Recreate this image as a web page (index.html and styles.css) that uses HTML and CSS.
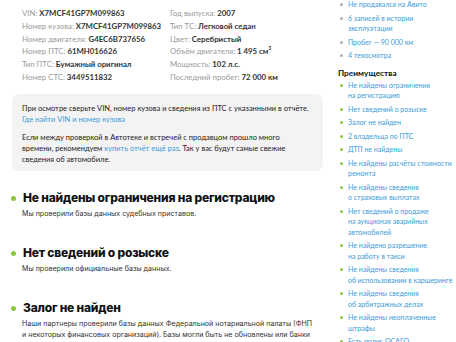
FILE: index.html
```html
<!DOCTYPE html>
<html lang="ru">
<head>
  <meta charset="UTF-8">
  <meta name="viewport" content="width=device-width, initial-scale=1.0">
  <title>Автотека — отчёт</title>
  <link rel="stylesheet" href="styles.css">
</head>
<body>

  <div class="page">
    <div class="main">

      <div class="info">
        <div class="info-col">
          <div class="row"><span class="lbl">VIN:</span> X7MCF41GP7M099863</div>
          <div class="row"><span class="lbl">Номер кузова:</span> X7MCF41GP7M099863</div>
          <div class="row"><span class="lbl">Номер двигателя:</span> G4EC6B737656</div>
          <div class="row"><span class="lbl">Номер ПТС:</span> 61MH016626</div>
          <div class="row"><span class="lbl">Тип ПТС:</span> Бумажный оригинал</div>
          <div class="row"><span class="lbl">Номер СТС:</span> 3449511832</div>
        </div>
        <div class="info-col">
          <div class="row"><span class="lbl">Год выпуска:</span> 2007</div>
          <div class="row"><span class="lbl">Тип ТС:</span> Легковой седан</div>
          <div class="row"><span class="lbl">Цвет:</span> Серебристый</div>
          <div class="row"><span class="lbl">Объём двигателя:</span> 1 495 см<sup>3</sup></div>
          <div class="row"><span class="lbl">Мощность:</span> 102 л.с.</div>
          <div class="row"><span class="lbl">Последний пробег:</span> 72 000 км</div>
        </div>
      </div>

      <div class="notice">
        <p>При осмотре сверьте VIN, номер кузова и сведения из ПТС с указанными в отчёте.<br>
          <a href="#">Где найти VIN и номер кузова</a></p>
        <p>Если между проверкой в Автотеке и встречей с продавцом прошло много<br>времени, рекомендуем <a href="#">купить отчёт ещё раз</a>. Так у вас будут самые свежие<br>сведения об автомобиле.</p>
      </div>

      <div class="check">
        <h2>Не найдены ограничения на регистрацию</h2>
        <p>Мы проверили базы данных судебных приставов.</p>
      </div>

      <div class="check">
        <h2>Нет сведений о розыске</h2>
        <p>Мы проверили официальные базы данных.</p>
      </div>

      <div class="check">
        <h2>Залог не найден</h2>
        <p>Наши партнеры проверили базы данных Федеральной нотариальной палаты (ФНП<br>и некоторых финансовых организаций). Базы могли быть не обновлены или банки<br>не передали информацию о залоге в ФНП, поэтому гарантированную</p>
      </div>

    </div>

    <div class="aside">
      <ul class="list grey">
        <li><a href="#">Не продавался на Авито</a></li>
        <li><a href="#">6 записей в истории<br>эксплуатации</a></li>
        <li><a href="#">Пробег — 90 000 км</a></li>
        <li><a href="#">4 техосмотра</a></li>
      </ul>

      <h3>Преимущества</h3>
      <ul class="list green">
        <li><a href="#">Не найдены ограничения<br>на регистрацию</a></li>
        <li><a href="#">Нет сведений о розыске</a></li>
        <li><a href="#">Залог не найден</a></li>
        <li><a href="#">2 владельца по ПТС</a></li>
        <li><a href="#">ДТП не найдены</a></li>
        <li><a href="#">Не найдены расчёты стоимости<br>ремонта</a></li>
        <li><a href="#">Не найдены сведения<br>о страховых выплатах</a></li>
        <li><a href="#">Нет сведений о продаже<br>на аукционах аварийных<br>автомобилей</a></li>
        <li><a href="#">Не найдено разрешение<br>на работу в такси</a></li>
        <li><a href="#">Не найдены сведения<br>об использовании в каршеринге</a></li>
        <li><a href="#">Не найдены сведения<br>об арбитражных делах</a></li>
        <li><a href="#">Не найдены неоплаченные<br>штрафы</a></li>
        <li><a href="#">Есть полис ОСАГО</a></li>
      </ul>
    </div>
  </div>

</body>
</html>
```

FILE: styles.css
```css
body {
  margin: 0;
  font-family: Lato, "Open Sans", sans-serif;
  color: #333;
  background: #fff;
}
a {
  color: #3a9bd8;
  text-decoration: none;
}
.page {
  display: flex;
  padding-left: 12px;
}
.main {
  width: 311px;
  flex-shrink: 0;
}
.info {
  display: flex;
  padding: 7px 0 0 10px;
  font-size: 7.8px;
  line-height: 12.8px;
}
.info-col {
  width: 148px;
}
.row {
  color: #333;
  font-weight: bold;
  white-space: nowrap;
}
.lbl {
  color: #9a9a9a;
  font-weight: normal;
}
.row sup {
  font-size: 5px;
  line-height: 0;
}
.notice {
  margin-top: 10px;
  background: #f3f3f3;
  border-radius: 7px;
  padding: 9px 10px 6px;
  font-size: 7.5px;
  line-height: 11px;
  color: #222;
  white-space: nowrap;
}
.notice p {
  margin: 0 0 7px;
}
.notice p:last-child {
  margin-bottom: 0;
}
.check {
  margin-top: 19px;
}
.check + .check {
  margin-top: 26px;
}
.check h2 {
  position: relative;
  margin: 0;
  padding-left: 11px;
  font-family: Inter, sans-serif;
  font-size: 12px;
  line-height: 16px;
  font-weight: 800;
  letter-spacing: -0.2px;
  color: #111;
}
.check h2::before {
  content: "";
  position: absolute;
  left: -1px;
  top: 6px;
  width: 5px;
  height: 5px;
  border-radius: 50%;
  background: #8cc63f;
}
.check p {
  margin: 2px 0 0 10px;
  font-family: Inter, sans-serif;
  font-size: 7.1px;
  line-height: 11px;
  color: #333;
  white-space: nowrap;
}
.aside {
  width: 118px;
  margin-left: 17px;
  margin-top: -1px;
}
.list {
  list-style: none;
  margin: 0;
  padding: 0;
  font-size: 7px;
  line-height: 10.5px;
  white-space: nowrap;
}
.list li {
  position: relative;
  padding-left: 8px;
  margin-bottom: 3px;
}
.list li::before {
  content: "";
  position: absolute;
  left: 0;
  top: 4px;
  width: 3px;
  height: 3px;
  border-radius: 50%;
}
.grey li::before {
  background: #b8b0a2;
}
.green li::before {
  background: #8cc63f;
}
.aside h3 {
  margin: 7px 0 1px -2px;
  font-size: 8.3px;
  line-height: 11px;
  font-weight: bold;
  color: #111;
}
```
